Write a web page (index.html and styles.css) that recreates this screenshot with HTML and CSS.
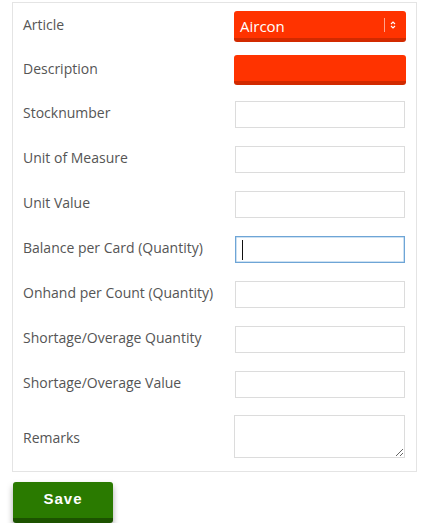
FILE: index.html
```html
<!DOCTYPE html>
<html>
<head>
<meta charset="utf-8">
<link rel="stylesheet" href="styles.css">
</head>
<body>
<form class="panel">
  <div class="row row-tight">
    <label class="label">Article</label>
    <div class="select">
      <span class="select-text">Aircon</span>
      <span class="select-arrow">
        <span class="divider"></span>
        <svg width="6" height="10" viewBox="0 0 6 10"><path d="M1 4 L3 2 L5 4 M1 6 L3 8 L5 6" fill="none" stroke="#fff" stroke-width="1.1"/></svg>
      </span>
    </div>
  </div>
  <div class="row row-tight">
    <label class="label">Description</label>
    <div class="select select-empty"></div>
  </div>
  <div class="row"><label class="label">Stocknumber</label><input class="input" type="text"></div>
  <div class="row"><label class="label">Unit of Measure</label><input class="input" type="text"></div>
  <div class="row"><label class="label">Unit Value</label><input class="input" type="text"></div>
  <div class="row"><label class="label">Balance per Card (Quantity)</label><div class="input focused"><span class="caret"></span></div></div>
  <div class="row"><label class="label">Onhand per Count (Quantity)</label><input class="input" type="text"></div>
  <div class="row"><label class="label">Shortage/Overage Quantity</label><input class="input" type="text"></div>
  <div class="row"><label class="label">Shortage/Overage Value</label><input class="input" type="text"></div>
  <div class="row row-remarks"><label class="label label-remarks">Remarks</label><textarea class="textarea"></textarea></div>
</form>
<button class="save" type="button">Save</button>
</body>
</html>
```
FILE: styles.css
```css
* { box-sizing: border-box; }
body {
  margin: 0;
  background: #fff;
  font-family: "Open Sans", "Liberation Sans", sans-serif;
}
.panel {
  margin: 2px 0 0 12px;
  width: 405px;
  border: 1px solid #e4e4e4;
  padding: 2px 9px 6px 10px;
}
.row {
  display: grid;
  grid-template-columns: 211px 172px;
  align-items: center;
  height: 45px;
}
.row-tight { height: 43.5px; }
.row-remarks { height: 58px; }
.label {
  font-size: 14px;
  color: #555;
  line-height: 20px;
  padding-bottom: 3px;
}
.label-remarks {
  padding-bottom: 0;
  padding-top: 4px;
}
.select {
  height: 31px;
  background: #ff3300;
  border-radius: 3px;
  border-bottom: 4px solid #d22a00;
  display: flex;
  align-items: center;
  justify-content: space-between;
  padding: 0 10px 0 6px;
  color: #fff;
}
.select-empty { height: 30px; }
.select-text {
  font-size: 15px;
  line-height: 20px;
  padding-top: 3px;
}
.select-arrow {
  display: flex;
  align-items: center;
  gap: 5px;
}
.divider {
  width: 1px;
  height: 14px;
  background: rgba(255,255,255,0.55);
}
.input {
  display: block;
  margin-left: 1px;
  width: 170px;
  height: 27px;
  border: 1px solid #dcdcdc;
  background: #fff;
  padding: 0 6px;
  font: inherit;
  outline: none;
}
.focused {
  border-color: #6ea5d6;
  box-shadow: inset 0 0 0 0.5px #9cc3e6;
  display: flex;
  align-items: center;
}
.caret {
  width: 1px;
  height: 20px;
  background: #111;
}
.textarea {
  display: block;
  width: 171px;
  height: 43px;
  border: 1px solid #dcdcdc;
  margin: 0;
  font: inherit;
}
.save {
  display: block;
  margin: 10px 0 0 13px;
  width: 100px;
  height: 41px;
  border: none;
  border-radius: 3px;
  background: #2a7a00;
  border-bottom: 5px solid #1c5200;
  box-shadow: 0 4px 6px rgba(0,0,0,0.35);
  color: #fff;
  font-family: "Liberation Sans", Arial, sans-serif;
  font-weight: bold;
  font-size: 15px;
  letter-spacing: 1px;
  padding: 0 0 3px;
}
```
